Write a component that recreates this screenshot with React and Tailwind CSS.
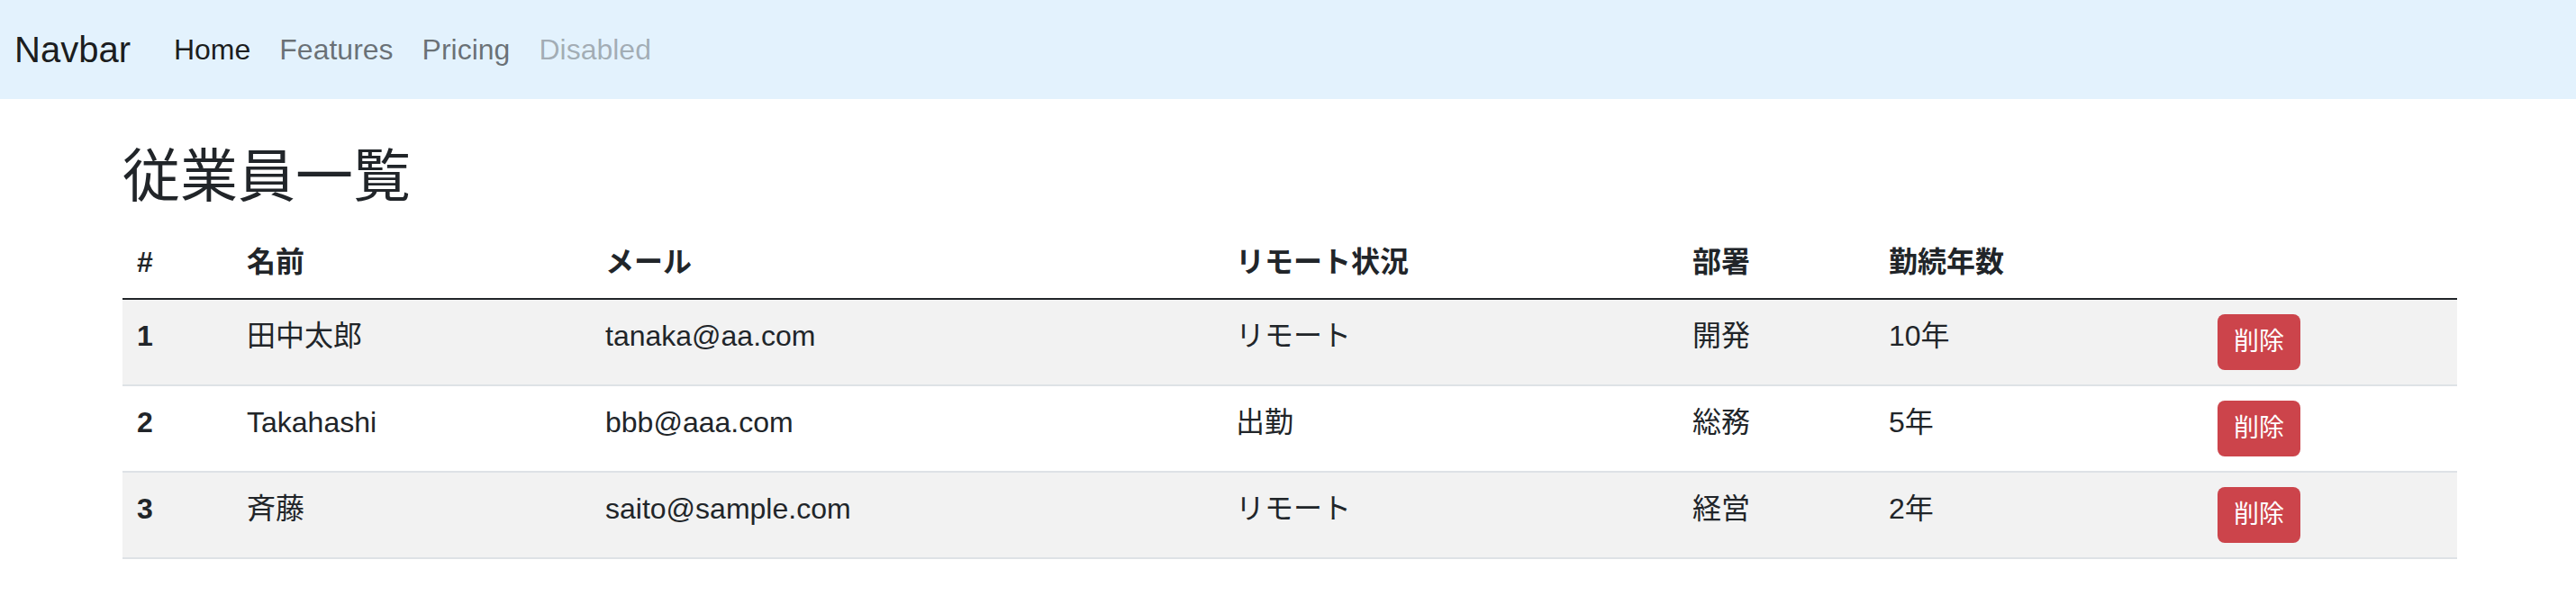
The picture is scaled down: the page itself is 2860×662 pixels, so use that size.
import React from "react";

const employees = [
  { id: 1, name: "田中太郎", mail: "tanaka@aa.com", remote: "リモート", dept: "開発", years: "10年" },
  { id: 2, name: "Takahashi", mail: "bbb@aaa.com", remote: "出勤", dept: "総務", years: "5年" },
  { id: 3, name: "斉藤", mail: "saito@sample.com", remote: "リモート", dept: "経営", years: "2年" },
];

const font = "font-['Liberation_Sans','Noto_Sans_CJK_JP',sans-serif]";

const App = () => {
  return (
    <div className={`min-h-screen bg-white text-[#212529] ${font}`}>
      {/* navbar */}
      <nav className="h-[110px] bg-[#e3f2fd] flex items-center px-4">
        <a href="#" className="text-[40px] leading-[60px] text-black/90 mr-8">
          Navbar
        </a>
        <ul className="flex items-center text-[32px] leading-[48px]">
          <li>
            <a href="#" className="px-4 text-black/90">Home</a>
          </li>
          <li>
            <a href="#" className="px-4 text-black/55">Features</a>
          </li>
          <li>
            <a href="#" className="px-4 text-black/55">Pricing</a>
          </li>
          <li>
            <span className="px-4 text-black/30">Disabled</span>
          </li>
        </ul>
      </nav>

      <div className="w-[2592px] ml-[136px] mt-[48px]">
        <h2 className="text-[64px] leading-[77px] font-normal mb-4">従業員一覧</h2>
        <table className="w-full table-fixed border-collapse text-[32px] leading-[48px]">
          <colgroup>
            <col className="w-[122px]" />
            <col className="w-[398px]" />
            <col className="w-[700px]" />
            <col className="w-[507px]" />
            <col className="w-[218px]" />
            <col className="w-[365px]" />
            <col className="w-[282px]" />
          </colgroup>
          <thead>
            <tr>
              {["#", "名前", "メール", "リモート状況", "部署", "勤続年数", ""].map((h, i) => (
                <th
                  key={i}
                  className="text-left align-top font-bold p-4 border-b-2 border-[#212529]"
                >
                  {h}
                </th>
              ))}
            </tr>
          </thead>
          <tbody>
            {employees.map((e, i) => (
              <tr key={e.id} className={i % 2 === 0 ? "bg-[#f2f2f2]" : "bg-white"}>
                <th className="text-left align-top font-bold p-4 border-b-2 border-[#dee2e6]">
                  {e.id}
                </th>
                <td className="align-top p-4 border-b-2 border-[#dee2e6]">{e.name}</td>
                <td className="align-top p-4 border-b-2 border-[#dee2e6]">{e.mail}</td>
                <td className="align-top p-4 border-b-2 border-[#dee2e6]">{e.remote}</td>
                <td className="align-top p-4 border-b-2 border-[#dee2e6]">{e.dept}</td>
                <td className="align-top p-4 border-b-2 border-[#dee2e6]">{e.years}</td>
                <td className="align-top p-4 border-b-2 border-[#dee2e6]">
                  <button className="block h-[62px] w-[92px] rounded-lg bg-[#cc444b] text-white text-[28px] leading-[42px]">
                    削除
                  </button>
                </td>
              </tr>
            ))}
          </tbody>
        </table>
      </div>
    </div>
  );
};

export default App;
